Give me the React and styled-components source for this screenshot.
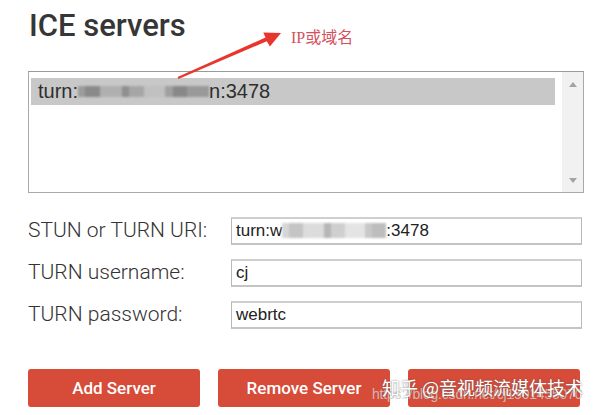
import styled, { createGlobalStyle } from "styled-components"

const GlobalStyle = createGlobalStyle`
    body {
        margin: 0;
        background: #ffffff;
        font-family: Roboto, "Liberation Sans", sans-serif;
    }
`

const Page = styled.div`
    position: relative;
    width: 600px;
    height: 415px;
    padding: 8px 16px 0 28px;
    box-sizing: border-box;
    overflow: hidden;
`

const Title = styled.h2`
    margin: 0 0 27px 1px;
    font-size: 31px;
    line-height: 36px;
    font-weight: 500;
    color: #363636;
`

const Listbox = styled.div`
    display: flex;
    height: 122px;
    width: 556px;
    box-sizing: border-box;
    border: 1px solid #a9a9a9;
    border-top-color: #9a9a9a;
    margin-bottom: 24px;
`

const OptionList = styled.div`
    flex: 1;
    padding: 6px 7px 0 2px;
`

const Option = styled.div`
    height: 27px;
    line-height: 27px;
    padding-left: 7px;
    font-family: "Liberation Sans", Arial, sans-serif;
    font-size: 20px;
    color: #2e2e2e;
    background: ${p => (p.selected ? "#c8c8c8" : "transparent")};
    white-space: nowrap;
`

const Scrollbar = styled.div`
    width: 21px;
    background: #f1f1f1;
    display: flex;
    flex-direction: column;
    justify-content: space-between;
    align-items: center;
    padding: 10px 0 9px;
    box-sizing: border-box;
`

const Blur = styled.span`
    display: inline-flex;
    vertical-align: middle;
    height: ${p => p.h}px;
    width: ${p => p.w}px;
    filter: blur(1.2px);
    margin-top: -3px;
`

const Pixel = styled.span`
    flex: ${p => p.grow};
    background: ${p => p.tone};
`

const Form = styled.div`
    display: grid;
    grid-template-columns: 203px 351px;
    row-gap: 14px;
    align-items: center;
`

const Label = styled.label`
    font-size: 21px;
    font-weight: 300;
    color: #333333;
    margin-top: -3px;
`

const Field = styled.div`
    height: 28px;
    box-sizing: border-box;
    border: 1px solid #b9b9b9;
    border-width: 2px 1px;
    border-top-color: #cfcfcf;
    border-bottom-color: #c4c4c4;
    padding: 0 4px;
    font-family: "Liberation Sans", Arial, sans-serif;
    font-size: 17px;
    line-height: 24px;
    color: #222222;
    white-space: nowrap;
    overflow: hidden;
`

const ButtonBar = styled.div`
    display: flex;
    gap: 18px;
    margin-top: 40px;
`

const Button = styled.button`
    width: 172px;
    height: 38px;
    border: none;
    border-radius: 3px;
    background: #d74b39;
    color: #ffffff;
    font-family: Roboto, sans-serif;
    font-size: 17px;
    font-weight: 500;
    padding: 0;
`

const Note = styled.div`
    position: absolute;
    left: 291px;
    top: 24px;
    font-family: "Liberation Serif", "Noto Sans CJK SC", serif;
    font-size: 16px;
    color: #d4505c;
`

const Arrow = styled.svg`
    position: absolute;
    left: 0;
    top: 0;
    width: 300px;
    height: 90px;
`

const Watermark = styled.div`
    position: absolute;
    left: 382px;
    top: 374px;
    font-family: "Noto Sans CJK SC", sans-serif;
    font-size: 18px;
    color: #ffffff;
    text-shadow: 0 0 2px rgba(90, 90, 90, 0.9);
    white-space: nowrap;
`

const WatermarkUrl = styled.div`
    position: absolute;
    left: 372px;
    top: 386px;
    font-family: "Liberation Sans", Arial, sans-serif;
    font-size: 14px;
    letter-spacing: -0.2px;
    color: rgba(205, 205, 205, 0.85);
    white-space: nowrap;
`

function Masked({ w, h, tones }) {
    return (
        <Blur w={w} h={h}>
            {tones.map((t, i) => <Pixel key={i} tone={t} grow={1 + (i % 3)} />)}
        </Blur>
    )
}

const darkTones = ["#9c9c9c", "#8a8a8a", "#b0b0b0", "#8f8f8f", "#a6a6a6", "#c0c0c0", "#a0a0a0", "#888888", "#999999"]
const lightTones = ["#d6d6d6", "#c4c4c4", "#dcdcdc", "#b6b6b6", "#cfcfcf", "#e4e4e4", "#c8c8c8", "#bdbdbd"]

export default function App() {
    return (
        <>
            <GlobalStyle />
            <Page>
                <Title>ICE servers</Title>
                <Listbox>
                    <OptionList>
                        <Option selected>turn:<Masked w={131} h={11} tones={darkTones} />n:3478</Option>
                    </OptionList>
                    <Scrollbar>
                        <svg width="8" height="5" viewBox="0 0 8 5"><path d="M0 5 L4 0 L8 5 Z" fill="#a3a3a3" /></svg>
                        <svg width="8" height="5" viewBox="0 0 8 5"><path d="M0 0 L8 0 L4 5 Z" fill="#a3a3a3" /></svg>
                    </Scrollbar>
                </Listbox>
                <Form>
                    <Label>STUN or TURN URI:</Label>
                    <Field>turn:w<Masked w={104} h={15} tones={lightTones} />:3478</Field>
                    <Label>TURN username:</Label>
                    <Field>cj</Field>
                    <Label>TURN password:</Label>
                    <Field>webrtc</Field>
                </Form>
                <ButtonBar>
                    <Button>Add Server</Button>
                    <Button>Remove Server</Button>
                    <Button />
                </ButtonBar>

                <Arrow viewBox="0 0 300 90">
                    <polygon
                        points="178.4,78.9 266.8,41.2 269.9,46.4 281,33 263.3,32.6 265.5,37.5 177.6,77.1"
                        fill="#e8352e"
                    />
                </Arrow>
                <Note>IP或域名</Note>
                <WatermarkUrl>https://blog.csdn.net/cj1501455070</WatermarkUrl>
                <Watermark>知乎 @音视频流媒体技术</Watermark>
            </Page>
        </>
    )
}
